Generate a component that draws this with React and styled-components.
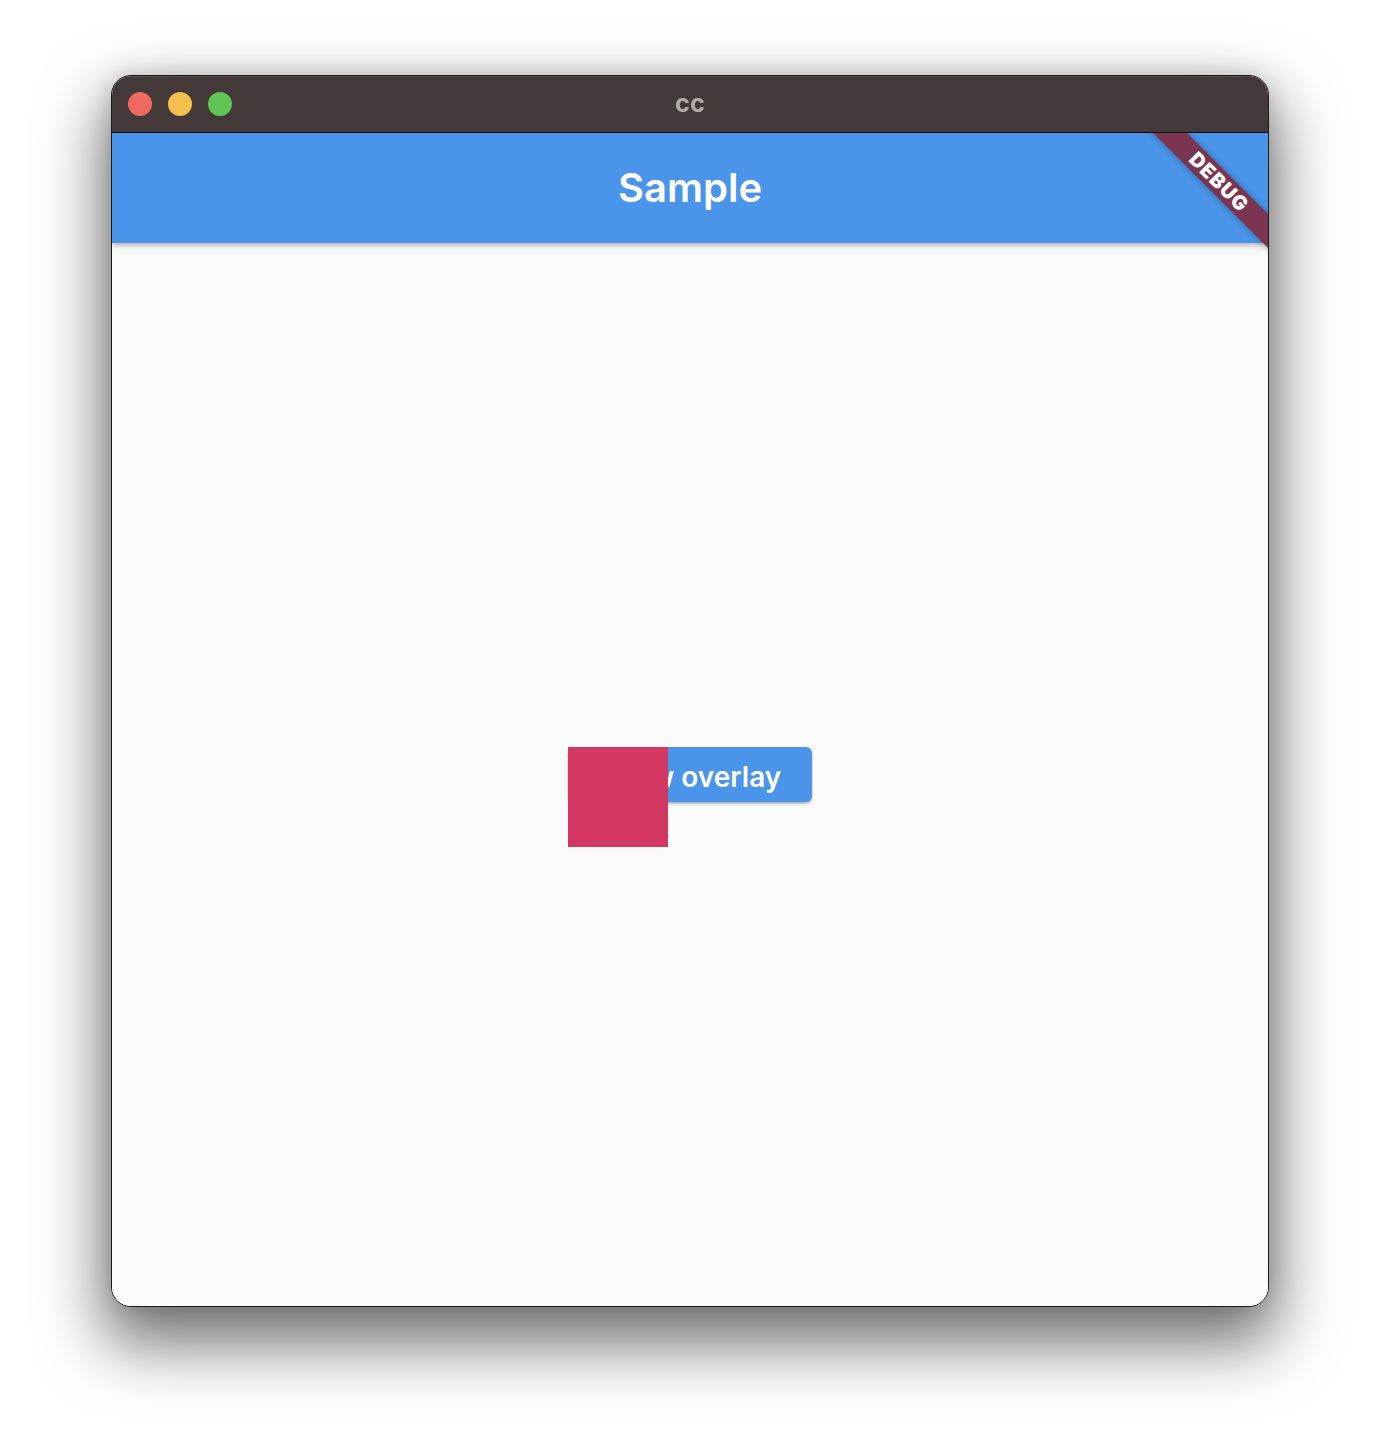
import React from "react";
import styled, { createGlobalStyle } from "styled-components";

const GlobalStyle = createGlobalStyle`
  html, body { margin: 0; padding: 0; background: #ffffff; }
  * { box-sizing: border-box; }
`;

const Page = styled.div`
  width: 1380px;
  height: 1454px;
  padding: 75px 111px 148px;
  font-family: Inter, "Noto Sans", sans-serif;
`;

const Window = styled.div`
  width: 1158px;
  height: 1232px;
  display: flex;
  flex-direction: column;
  border: 1px solid #1a1a1a;
  border-radius: 20px;
  overflow: hidden;
  background: #fafafa;
  box-shadow: 0 30px 64px 8px rgba(0, 0, 0, 0.55), 0 0 22px rgba(0, 0, 0, 0.14);
`;

const TitleBar = styled.div`
  height: 57px;
  flex: none;
  display: grid;
  grid-template-columns: 1fr auto 1fr;
  align-items: center;
  padding: 0 16px;
  background: #433938;
  border-bottom: 1px solid #0c0a0a;
  box-shadow: inset 0 1px 0 rgba(255, 255, 255, 0.12);
`;

const Lights = styled.div`
  display: flex;
  gap: 16px;
`;

const Light = styled.span`
  width: 24px;
  height: 24px;
  border-radius: 50%;
  background: ${(p) => p.$color};
`;

const WindowTitle = styled.div`
  color: #b4aba8;
  font-size: 25px;
  font-weight: 700;
  letter-spacing: 0.3px;
  line-height: 1;
  padding-bottom: 2px;
`;

const Content = styled.div`
  position: relative;
  flex: 1;
  display: flex;
  flex-direction: column;
  overflow: hidden;
`;

const AppBar = styled.header`
  height: 110px;
  flex: none;
  display: flex;
  align-items: center;
  justify-content: center;
  background: #4a94ea;
  box-shadow: 0 2px 4px rgba(0, 0, 0, 0.2), 0 4px 8px rgba(0, 0, 0, 0.1);
  position: relative;
  z-index: 1;
`;

const AppTitle = styled.h1`
  margin: 0;
  color: #ffffff;
  font-size: 40px;
  font-weight: 600;
  line-height: 1;
  letter-spacing: 0px;
`;

const Body = styled.main`
  flex: 1;
  display: flex;
  align-items: center;
  justify-content: center;
  background: #fafafa;
`;

const Stack = styled.div`
  position: relative;
`;

const Button = styled.button`
  display: flex;
  align-items: center;
  justify-content: center;
  width: 244px;
  height: 55px;
  padding: 5px 0 0;
  border: none;
  border-radius: 6px;
  background: #4a94ea;
  color: #ffffff;
  font-family: Inter, "Noto Sans", sans-serif;
  font-size: 28px;
  font-weight: 600;
  box-shadow: 0 2px 3px rgba(0, 0, 0, 0.22), 0 1px 2px rgba(0, 0, 0, 0.12);
  cursor: pointer;
`;

const OverlayBox = styled.div`
  position: absolute;
  left: 0;
  top: 0;
  width: 100px;
  height: 100px;
  background: #d33862;
`;

const Banner = styled.div`
  position: absolute;
  top: 49px;
  right: 49px;
  width: 190px;
  height: 24px;
  transform: translate(50%, -50%) rotate(45deg);
  display: flex;
  align-items: center;
  justify-content: center;
  background: #7a3650;
  box-shadow: 0 0 6px rgba(0, 0, 0, 0.3);
  color: #ffffff;
  font-family: Inter, "DejaVu Sans", sans-serif;
  font-size: 20px;
  font-weight: 900;
  letter-spacing: 1px;
  line-height: 1;
  z-index: 2;
  pointer-events: none;
`;

export default function App() {
  return (
    <>
      <GlobalStyle />
      <Page>
        <Window>
          <TitleBar>
            <Lights>
              <Light $color="#ee6a5f" />
              <Light $color="#f5bf4f" />
              <Light $color="#61c554" />
            </Lights>
            <WindowTitle>cc</WindowTitle>
            <span />
          </TitleBar>
          <Content>
            <AppBar>
              <AppTitle>Sample</AppTitle>
            </AppBar>
            <Body>
              <Stack>
                <Button>Show overlay</Button>
                <OverlayBox />
              </Stack>
            </Body>
            <Banner>DEBUG</Banner>
          </Content>
        </Window>
      </Page>
    </>
  );
}
